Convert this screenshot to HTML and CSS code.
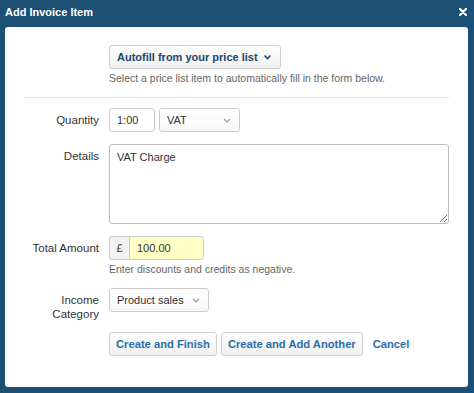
FILE: index.html
```html
<!DOCTYPE html>
<html lang="en">
<head>
  <meta charset="UTF-8">
  <meta name="viewport" content="width=device-width, initial-scale=1.0">
  <title>Add Invoice Item</title>
  <link rel="stylesheet" href="styles.css">
</head>
<body>
  <div class="dialog">
    <div class="dialog-head">
      <h1>Add Invoice Item</h1>
      <span class="close" title="Close">
        <svg width="8" height="8" viewBox="0 0 8 8"><path d="M1 1L7 7M7 1L1 7" stroke="#fff" stroke-width="2.2" stroke-linecap="round"/></svg>
      </span>
    </div>

    <div class="dialog-body">
      <div class="row autofill-row">
        <span></span>
        <div class="controls">
          <button type="button" class="btn btn-autofill">
            Autofill from your price list
            <svg class="chev" width="9" height="6" viewBox="0 0 9 6"><path d="M1.5 1.5L4.5 4.5L7.5 1.5" fill="none" stroke="#20466c" stroke-width="1.6"/></svg>
          </button>
          <p class="help">Select a price list item to automatically fill in the form below.</p>
        </div>
      </div>

      <hr class="divider">

      <form class="form">
        <div class="row">
          <label for="qty">Quantity</label>
          <div class="controls inline">
            <input type="text" id="qty" class="field qty" value="1:00">
            <div class="field select unit">VAT <svg class="chev" width="8" height="5" viewBox="0 0 8 5"><path d="M1 1L4 4L7 1" fill="none" stroke="#999" stroke-width="1.2"/></svg></div>
          </div>
        </div>

        <div class="row">
          <label for="details">Details</label>
          <div class="controls">
            <textarea id="details" class="field details">VAT Charge</textarea>
          </div>
        </div>

        <div class="row">
          <label for="amount">Total Amount</label>
          <div class="controls">
            <div class="money">
              <span class="addon">£</span>
              <input type="text" id="amount" class="field amount" value="100.00">
            </div>
            <p class="help">Enter discounts and credits as negative.</p>
          </div>
        </div>

        <div class="row">
          <label for="category">Income<br>Category</label>
          <div class="controls">
            <div class="field select category">Product sales <svg class="chev" width="8" height="5" viewBox="0 0 8 5"><path d="M1 1L4 4L7 1" fill="none" stroke="#999" stroke-width="1.2"/></svg></div>
          </div>
        </div>

        <div class="row actions">
          <span></span>
          <div class="controls inline">
            <button type="submit" class="btn">Create and Finish</button>
            <button type="button" class="btn">Create and Add Another</button>
            <a href="#" class="cancel">Cancel</a>
          </div>
        </div>
      </form>
    </div>
  </div>
</body>
</html>
```

FILE: styles.css
```css
/* General Reset */
* {
  margin: 0;
  padding: 0;
  box-sizing: border-box;
}

body {
  font-family: 'Liberation Sans', Arial, sans-serif;
  font-size: 11px;
  color: #333;
  background: #1c4f74;
  height: 393px;
  overflow: hidden;
}

.dialog {
  padding: 0 6px 6px 5px;
}

.dialog-head {
  height: 27px;
  display: flex;
  align-items: center;
  justify-content: space-between;
  padding-bottom: 3px;
}

.dialog-head h1 {
  font-size: 11px;
  font-weight: bold;
  color: #fff;
}

.close {
  display: flex;
  margin-right: 1px;
}

.dialog-body {
  background: #fff;
  border-radius: 3px;
  height: 360px;
  padding: 18px 19px 0 0;
}

.row {
  display: grid;
  grid-template-columns: 94px 1fr;
  column-gap: 10px;
  margin-bottom: 12px;
}

.row label {
  text-align: right;
  font-size: 11.5px;
  padding-top: 5px;
  line-height: 14px;
}

.controls.inline {
  display: flex;
  gap: 4px;
  align-items: center;
}

.help {
  color: #666;
  font-size: 10.5px;
  line-height: 14px;
  margin-top: 2px;
}

.divider {
  border: none;
  border-top: 1px solid #e4e4e4;
  margin: 12px 0 10px 19px;
}

.autofill-row {
  margin-bottom: 0;
}

/* Buttons */
.btn {
  font-family: inherit;
  font-size: 11.2px;
  font-weight: bold;
  color: #2c6da8;
  height: 24px;
  padding: 0 6px;
  white-space: nowrap;
  flex-shrink: 0;
  background: linear-gradient(#fdfdfd, #f1f1f1);
  border: 1px solid #cfcfcf;
  border-radius: 3px;
  cursor: pointer;
}

.btn-autofill {
  font-size: 11px;
  color: #20466c;
  padding: 0 8px 0 7px;
  display: inline-flex;
  align-items: center;
  gap: 5px;
}

.actions {
  margin-top: -1px;
}

.cancel {
  color: #2c6da8;
  font-size: 11.2px;
  font-weight: bold;
  text-decoration: none;
  margin-left: 6px;
}

/* Fields */
.field {
  font-family: inherit;
  font-size: 11px;
  color: #333;
  height: 24px;
  border: 1px solid #cbcbcb;
  border-radius: 3px;
  background: #fff;
  padding: 0 7px;
  outline: none;
}

.qty {
  width: 46px;
}

.select {
  display: flex;
  align-items: center;
  justify-content: space-between;
  white-space: nowrap;
  background: linear-gradient(#fff, #f7f7f7);
  padding: 0 8px 0 7px;
}

.unit {
  width: 81px;
}

.category {
  width: 100px;
}

.details {
  display: block;
  width: 100%;
  height: 80px;
  padding: 5px 7px;
  resize: vertical;
  line-height: 14px;
  border-color: #bdbdbd;
}

.money {
  display: flex;
  width: 95px;
}

.addon {
  width: 20px;
  height: 24px;
  display: flex;
  align-items: center;
  justify-content: center;
  background: #f3f3f3;
  border: 1px solid #cbcbcb;
  border-right: none;
  border-radius: 3px 0 0 3px;
}

.amount {
  width: 75px;
  background: #ffffc6;
  border-radius: 0 3px 3px 0;
}
```
